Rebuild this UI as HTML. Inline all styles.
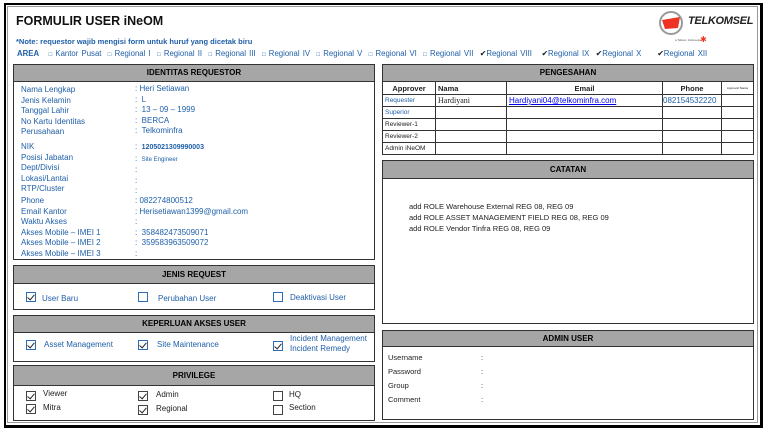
<!DOCTYPE html>
<html><head><meta charset="utf-8"><style>
*{margin:0;padding:0;box-sizing:border-box}
body{width:768px;height:433px;background:#fff;position:relative;overflow:hidden;font-family:"Liberation Sans",sans-serif;font-size:8px;color:#1f5fa8}
.a{position:absolute;white-space:nowrap}
.frame{position:absolute;left:4px;top:3px;width:759px;height:425px;border:2px solid #000;border-right-width:3px;border-bottom-width:3px}
.frame2{position:absolute;left:7px;top:6px;width:751px;height:417px;border:1px solid #999}
.box{position:absolute;border:1px solid #333;background:#fff}
.hd{position:absolute;left:0;right:0;top:0;background:#a6a6a6;border-bottom:1px solid #333;color:#000;font-weight:bold;text-align:center;font-size:8px}
.lbl{position:absolute;left:7px;line-height:10.5px}
.val{position:absolute;left:121px;line-height:10.5px}
.cb{position:absolute;width:10px;height:10px;border:1px solid #444}
.cb.b{border-color:#2e6db4}
.cb.k::after{content:"";position:absolute;left:2px;top:0px;width:3px;height:6px;border:solid #222;border-width:0 1.5px 1.5px 0;transform:rotate(40deg)}
.dk{color:#222}
table{border-collapse:collapse;position:absolute;left:-1px;top:16px;width:372px;font-size:6.5px}
td{border:1px solid #333;height:12px;padding:0 2px;color:#222}
</style></head><body>
<div class="frame"></div><div class="frame2"></div>
<div class="a" style="left:16px;top:14px;font-size:12.5px;font-weight:bold;color:#111">FORMULIR USER iNeOM</div>
<div class="a" style="left:16px;top:37px;font-size:7.5px;font-weight:bold;color:#1f5fa8">*Note: requestor wajib mengisi form untuk huruf yang dicetak biru</div>
<div class="a" style="left:17px;top:49px;font-size:7.8px;word-spacing:1px"><b>AREA</b> &nbsp;&nbsp;<span style="font-size:6px">□</span> Kantor Pusat &nbsp;<span style="font-size:6px">□</span> Regional I &nbsp;<span style="font-size:6px">□</span> Regional II &nbsp;<span style="font-size:6px">□</span> Regional III &nbsp;<span style="font-size:6px">□</span> Regional IV &nbsp;<span style="font-size:6px">□</span> Regional V &nbsp;<span style="font-size:6px">□</span> Regional VI &nbsp;<span style="font-size:6px">□</span> Regional VII &nbsp;<span class="dk">✔</span>Regional VIII &nbsp;&nbsp;<span class="dk">✔</span>Regional IX &nbsp;<span class="dk">✔</span>Regional X &nbsp;&nbsp;&nbsp;&nbsp;<span class="dk">✔</span>Regional XII</div>
<!-- logo -->
<svg class="a" style="left:656px;top:11px" width="30" height="24" viewBox="0 0 30 24"><circle cx="15" cy="12" r="11" fill="none" stroke="#999" stroke-width="2"/><path d="M6 9 L24 6 L22 17 L9 18 Z" fill="#e32" /></svg>
<div class="a" style="left:688px;top:15px;font-size:11px;font-weight:bold;font-style:italic;color:#222;letter-spacing:-0.3px">TELKOMSEL</div>
<div class="a" style="left:675px;top:38px;font-size:3px;color:#555">a Telkom Indonesia</div>
<div class="a" style="left:700px;top:35px;font-size:8px;color:#e32">✱</div>

<!-- Identitas -->
<div class="box" style="left:13px;top:64px;width:362px;height:196px">
<div class="hd" style="height:17px;line-height:16px">IDENTITAS REQUESTOR</div>
<div class="lbl" style="top:20px">Nama Lengkap<br>Jenis Kelamin<br>Tanggal Lahir<br>No Kartu Identitas<br>Perusahaan</div>
<div class="val" style="top:19px">: Heri Setiawan<br>: &nbsp;L<br>: &nbsp;13 – 09 – 1999<br>: &nbsp;BERCA<br>: &nbsp;Telkominfra</div>
<div class="lbl" style="top:77px">NIK<br>Posisi Jabatan<br>Dept/Divisi<br>Lokasi/Lantai<br>RTP/Cluster</div>
<div class="val" style="top:77px">: &nbsp;<b style="font-size:7px">1205021309990003</b><br>: &nbsp;<span style="font-size:6px">Site Engineer</span><br>:<br>:<br>:</div>
<div class="lbl" style="top:131px">Phone<br>Email Kantor<br>Waktu Akses<br>Akses Mobile – IMEI 1<br>Akses Mobile – IMEI 2<br>Akses Mobile – IMEI 3</div>
<div class="val" style="top:131px">: 082274800512<br>: Herisetiawan1399@gmail.com<br>:<br>: &nbsp;358482473509071<br>: &nbsp;359583963509072<br>:</div>
</div>

<!-- Jenis -->
<div class="box" style="left:13px;top:265px;width:362px;height:45px">
<div class="hd" style="height:18px;line-height:17px">JENIS REQUEST</div>
<div class="cb b k" style="left:12px;top:26px"></div><div class="a" style="left:28px;top:28px">User Baru</div>
<div class="cb b" style="left:124px;top:26px"></div><div class="a" style="left:144px;top:28px">Perubahan User</div>
<div class="cb b" style="left:259px;top:26px"></div><div class="a" style="left:276px;top:27px">Deaktivasi User</div>
</div>

<!-- Keperluan -->
<div class="box" style="left:13px;top:315px;width:362px;height:47px">
<div class="hd" style="height:17px;line-height:16px">KEPERLUAN AKSES USER</div>
<div class="cb k" style="left:12px;top:24px;border-color:#2e6db4"></div><div class="a" style="left:30px;top:24px">Asset Management</div>
<div class="cb k" style="left:124px;top:24px;border-color:#2e6db4"></div><div class="a" style="left:143px;top:24px">Site Maintenance</div>
<div class="cb k" style="left:259px;top:25px;border-color:#2e6db4"></div><div class="a" style="left:276px;top:18px;line-height:10px">Incident Management<br>Incident Remedy</div>
</div>

<!-- Privilege -->
<div class="box" style="left:13px;top:365px;width:362px;height:56px;color:#222">
<div class="hd" style="height:20px;line-height:19px">PRIVILEGE</div>
<div class="cb k" style="left:12px;top:25px"></div><div class="a" style="left:29px;top:23px">Viewer</div>
<div class="cb k" style="left:12px;top:38px"></div><div class="a" style="left:29px;top:37px">Mitra</div>
<div class="cb k" style="left:124px;top:25px"></div><div class="a" style="left:142px;top:24px">Admin</div>
<div class="cb k" style="left:124px;top:39px"></div><div class="a" style="left:142px;top:38px">Regional</div>
<div class="cb" style="left:259px;top:25px"></div><div class="a" style="left:275px;top:24px">HQ</div>
<div class="cb" style="left:259px;top:39px"></div><div class="a" style="left:275px;top:37px">Section</div>
</div>

<!-- Pengesahan -->
<div class="box" style="left:382px;top:64px;width:372px;height:90px;border-bottom:none">
<div class="hd" style="height:17px;line-height:16px">PENGESAHAN</div>
<table>
<tr style="font-weight:bold;font-size:7.5px;height:13px"><td style="width:53px;text-align:center">Approver</td><td style="width:71px">Nama</td><td style="width:156px;text-align:center">Email</td><td style="width:59px;text-align:center">Phone</td><td style="font-size:3px;text-align:center;font-weight:normal">Approval Status</td></tr>
<tr><td style="color:#1f5fa8">Requester</td><td style="font-family:'Liberation Serif',serif;font-size:8px">Hardiyani</td><td style="color:#00e;text-decoration:underline;font-size:8px">Hardiyani04@telkominfra.com</td><td style="color:#1f5fa8;font-size:8px;padding:0">082154532220</td><td></td></tr>
<tr><td style="color:#1f5fa8">Superior</td><td></td><td></td><td></td><td></td></tr>
<tr><td>Reviewer-1</td><td></td><td></td><td></td><td></td></tr>
<tr><td>Reviewer-2</td><td></td><td></td><td></td><td></td></tr>
<tr><td>Admin iNeOM</td><td></td><td></td><td></td><td></td></tr>
</table>
</div>

<!-- Catatan -->
<div class="box" style="left:382px;top:160px;width:372px;height:164px;color:#222">
<div class="hd" style="height:18px;line-height:17px">CATATAN</div>
<div class="a" style="left:26px;top:40px;line-height:11px;font-size:7.5px">add ROLE Warehouse External REG 08, REG 09<br>add ROLE ASSET MANAGEMENT FIELD REG 08, REG 09<br>add ROLE Vendor Tinfra REG 08, REG 09</div>
</div>

<!-- Admin -->
<div class="box" style="left:382px;top:330px;width:372px;height:90px;color:#222">
<div class="hd" style="height:16px;line-height:15px">ADMIN USER</div>
<div class="a" style="left:5px;top:20px;line-height:14px;font-size:7.5px">Username<br>Password<br>Group<br>Comment</div>
<div class="a" style="left:98px;top:20px;line-height:14px;font-size:7.5px">:<br>:<br>:<br>:</div>
</div>
</body></html>
